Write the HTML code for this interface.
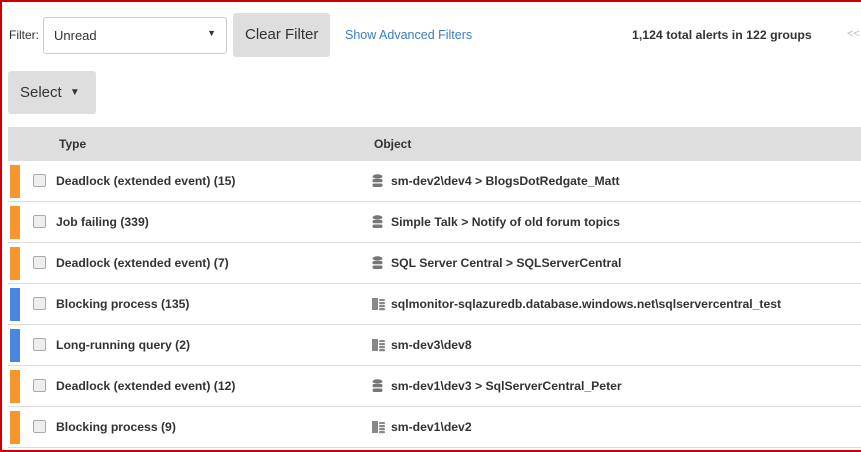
<!DOCTYPE html>
<html><head><style>
*{margin:0;padding:0;box-sizing:border-box}
body{width:861px;height:452px;overflow:hidden;background:#fff;font-family:"Liberation Sans",Arial,sans-serif;color:#333;position:relative}
.frame{position:absolute;left:0;top:0;width:861px;height:452px;border-top:2px solid #cc0000;border-left:2px solid #cc0000;border-bottom:2px solid #cc0000}
.abs{position:absolute}
.sel{left:43px;top:17px;width:184px;height:37px;border:1px solid #ccc;border-radius:3px;font-size:13px;padding:10px 0 0 10px}
.btn{background:#dedede;border-radius:3px}
.hdr{left:8px;top:127px;width:853px;height:34px;background:#dedede;font-size:12px;font-weight:bold}
.row{position:absolute;left:8px;width:853px;height:41px;border-bottom:1px solid #ddd;font-size:12.2px;font-weight:bold;color:#333}
.bar{position:absolute;left:2px;top:4px;width:10px;height:33px}
.cb{position:absolute;left:25px;top:13px;width:13px;height:13px;border:1px solid #aaa;border-radius:2px;background:#eee}
.t{position:absolute;left:48px;top:13px}
.o{position:absolute;left:383px;top:13px}
.ic{position:absolute;left:364px;top:13px}
</style></head><body>
<div class="abs" style="left:9px;top:28px;font-size:12px">Filter:</div>
<div class="abs sel">Unread<span style="position:absolute;right:10px;top:10px;font-size:9px">▼</span></div>
<div class="abs btn" style="left:233px;top:13px;width:97px;height:44px;font-size:15px;padding:13px 0 0 12px">Clear Filter</div>
<div class="abs" style="left:345px;top:28px;font-size:12.5px;color:#3a7bc8">Show Advanced Filters</div>
<div class="abs" style="left:632px;top:28px;font-size:12.3px;font-weight:bold;color:#333">1,124 total alerts in 122 groups</div>
<div class="abs" style="left:847px;top:28px;font-size:11px;color:#bbb">&lt;&lt;</div>
<div class="abs btn" style="left:8px;top:71px;width:88px;height:43px;font-size:15px;padding:13px 0 0 12px">Select <span style="font-size:10px;margin-left:4px;vertical-align:2px">▼</span></div>
<div class="abs hdr"><span class="abs" style="left:51px;top:10px">Type</span><span class="abs" style="left:366px;top:10px">Object</span></div>

<div class="row" style="top:161px"><div class="bar" style="background:#f7962d"></div><div class="cb"></div><div class="t">Deadlock (extended event) (15)</div><svg class="ic" width="11" height="14"><g fill="#777"><ellipse cx="5.5" cy="2.5" rx="5" ry="2.2"/><rect x=".5" y="5" width="10" height="3.3" rx="1.6"/><rect x=".5" y="9.5" width="10" height="3.5" rx="1.7"/></g></svg><div class="o">sm-dev2\dev4 &gt; BlogsDotRedgate_Matt</div></div>
<div class="row" style="top:202px"><div class="bar" style="background:#f7962d"></div><div class="cb"></div><div class="t">Job failing (339)</div><svg class="ic" width="11" height="14"><g fill="#777"><ellipse cx="5.5" cy="2.5" rx="5" ry="2.2"/><rect x=".5" y="5" width="10" height="3.3" rx="1.6"/><rect x=".5" y="9.5" width="10" height="3.5" rx="1.7"/></g></svg><div class="o">Simple Talk &gt; Notify of old forum topics</div></div>
<div class="row" style="top:243px"><div class="bar" style="background:#f7962d"></div><div class="cb"></div><div class="t">Deadlock (extended event) (7)</div><svg class="ic" width="11" height="14"><g fill="#777"><ellipse cx="5.5" cy="2.5" rx="5" ry="2.2"/><rect x=".5" y="5" width="10" height="3.3" rx="1.6"/><rect x=".5" y="9.5" width="10" height="3.5" rx="1.7"/></g></svg><div class="o">SQL Server Central &gt; SQLServerCentral</div></div>
<div class="row" style="top:284px"><div class="bar" style="background:#4a86e0"></div><div class="cb"></div><div class="t">Blocking process (135)</div><svg class="ic" width="14" height="14"><g fill="#888"><rect x="0" y="1" width="6" height="12"/><rect x="7" y="5" width="6" height="2.3" rx="1"/><rect x="7" y="8" width="6" height="2.3" rx="1"/><rect x="7" y="11" width="6" height="2.3" rx="1"/><rect x="7" y="2" width="6" height="2" rx="1"/></g></svg><div class="o">sqlmonitor-sqlazuredb.database.windows.net\sqlservercentral_test</div></div>
<div class="row" style="top:325px"><div class="bar" style="background:#4a86e0"></div><div class="cb"></div><div class="t">Long-running query (2)</div><svg class="ic" width="14" height="14"><g fill="#888"><rect x="0" y="1" width="6" height="12"/><rect x="7" y="5" width="6" height="2.3" rx="1"/><rect x="7" y="8" width="6" height="2.3" rx="1"/><rect x="7" y="11" width="6" height="2.3" rx="1"/><rect x="7" y="2" width="6" height="2" rx="1"/></g></svg><div class="o">sm-dev3\dev8</div></div>
<div class="row" style="top:366px"><div class="bar" style="background:#f7962d"></div><div class="cb"></div><div class="t">Deadlock (extended event) (12)</div><svg class="ic" width="11" height="14"><g fill="#777"><ellipse cx="5.5" cy="2.5" rx="5" ry="2.2"/><rect x=".5" y="5" width="10" height="3.3" rx="1.6"/><rect x=".5" y="9.5" width="10" height="3.5" rx="1.7"/></g></svg><div class="o">sm-dev1\dev3 &gt; SqlServerCentral_Peter</div></div>
<div class="row" style="top:407px"><div class="bar" style="background:#f7962d"></div><div class="cb"></div><div class="t">Blocking process (9)</div><svg class="ic" width="14" height="14"><g fill="#888"><rect x="0" y="1" width="6" height="12"/><rect x="7" y="5" width="6" height="2.3" rx="1"/><rect x="7" y="8" width="6" height="2.3" rx="1"/><rect x="7" y="11" width="6" height="2.3" rx="1"/><rect x="7" y="2" width="6" height="2" rx="1"/></g></svg><div class="o">sm-dev1\dev2</div></div>
<div class="frame"></div>
</body></html>
